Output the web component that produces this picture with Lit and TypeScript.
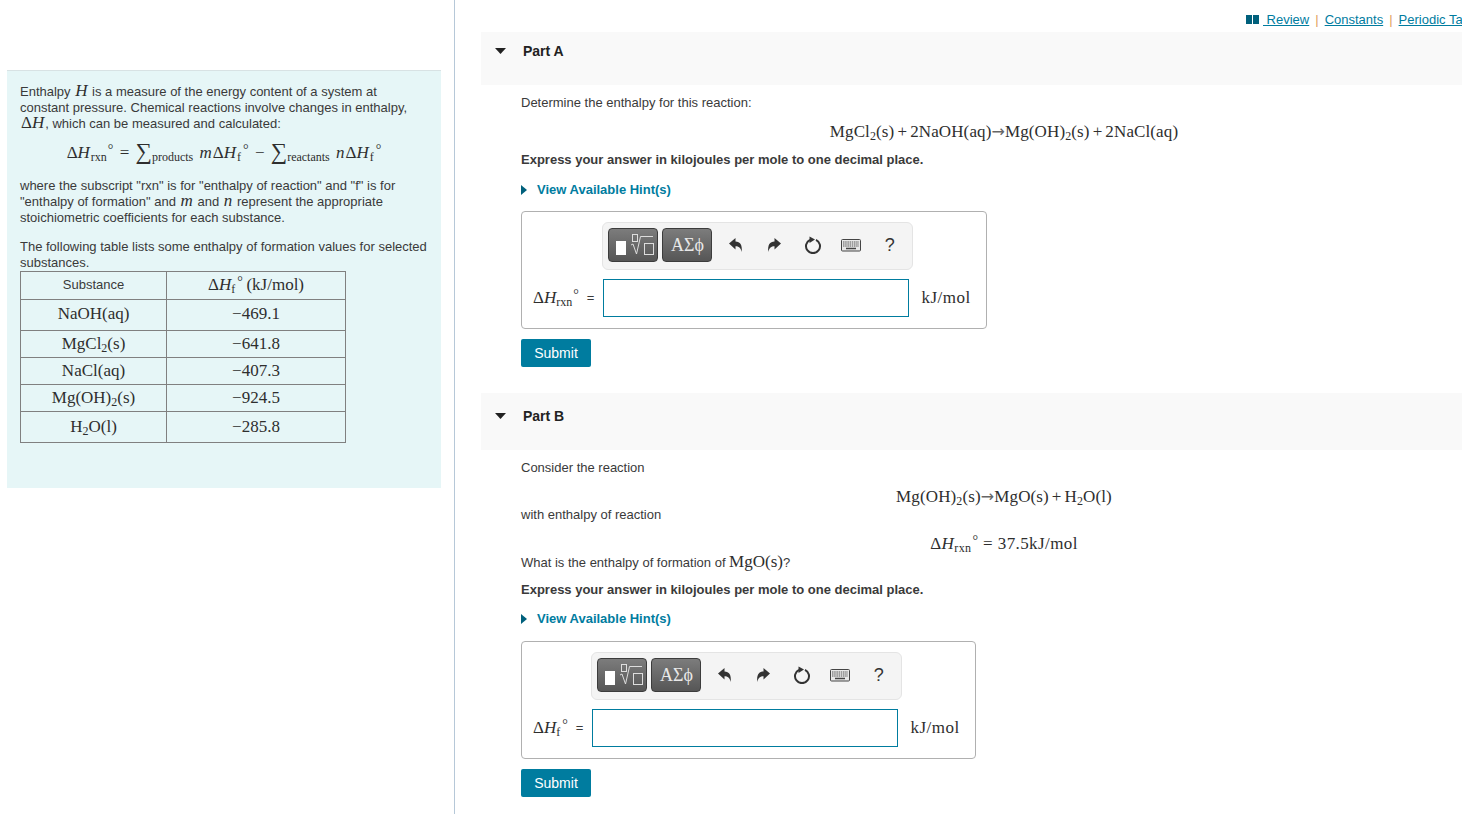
import { LitElement, css, html } from 'lit';
import { customElement } from 'lit/decorators.js';

const rows = [
	['NaOH(aq)', '469.1', 'tall up'],
	['MgCl<sub>2</sub>(s)', '641.8', ''],
	['NaCl(aq)', '407.3', ''],
	['Mg(OH)<sub>2</sub>(s)', '924.5', ''],
	['H<sub>2</sub>O(l)', '285.8', 'tall'],
];

const sub = (s: string) => html`<span class="sub">${s}</span>`;
const dHf = html`<span class="m">Δ<i>H</i>${sub('f')}<span class="deg f">°</span></span>`;
const dHrxn = html`<span class="m">Δ<i>H</i>${sub('rxn')}<span class="deg">°</span></span>`;
const plus = html`<span class="op">+</span>`;
const arrow = html`<span class="arrow">→</span>`;

@customElement('app-root')
export class AppRoot extends LitElement {
	static styles = css`
		:host {
			display: block;
			width: 1462px;
			height: 814px;
			overflow: hidden;
			background: #fff;
			color: #3a3a3a;
			font-family: 'Liberation Sans', Arial, sans-serif;
			font-size: 13px;
			line-height: 16px;
		}
		.page {
			display: flex;
			height: 814px;
		}
		.left {
			flex: none;
			width: 434px;
			height: 814px;
			padding: 70px 13px 0 7px;
			border-right: 1px solid #b6c8d8;
		}
		.panel {
			background: #e6f6f7;
			border-top: 1px solid #d8e2e4;
			padding: 13px 13px 45px;
		}
		.panel p {
			margin: 0;
		}
		.panel p .m {
			line-height: 0;
			margin: 0 1px;
		}
		.formula {
			display: flex;
			justify-content: center;
			align-items: center;
			box-sizing: border-box;
			height: 46px;
			padding-bottom: 4px;
			white-space: nowrap;
			word-spacing: 2px;
		}
		.formula i {
			letter-spacing: 1px;
		}
		.gap {
			margin-top: 13px !important;
		}
		.m {
			font-family: 'Liberation Serif', 'Times New Roman', serif;
			font-size: 17px;
			color: #2e2e2e;
			white-space: nowrap;
		}
		.m i {
			font-style: italic;
		}
		.sub,
		.m sub {
			font-size: 12px;
			vertical-align: -3px;
			line-height: 0;
		}
		.deg {
			font-size: 14px;
			vertical-align: 4px;
			line-height: 0;
			margin-left: 1px;
		}
		.deg.f {
			margin-left: 2px;
		}
		.sigma {
			font-size: 23px;
			vertical-align: -1px;
			line-height: 0;
		}
		.op {
			margin: 0 3px;
		}
		.arrow {
			font-family: 'DejaVu Sans', sans-serif;
			font-size: 16px;
			color: #666;
		}
		table {
			border-collapse: collapse;
			width: 326px;
		}
		td {
			border: 1px solid #808080;
			text-align: center;
			padding: 0;
			height: 26px;
		}
		td:first-child {
			width: 145px;
		}
		tr.tall td {
			height: 30px;
		}
		tr.up td {
			height: 29px;
			padding-bottom: 1px;
		}
		tr.head td {
			height: 26px;
			padding-bottom: 1px;
		}
		.right {
			flex: none;
			width: 1006px;
			margin-left: 26px;
		}
		.links {
			height: 32px;
			display: flex;
			justify-content: flex-end;
			align-items: flex-start;
			padding: 12px 7px 0 0;
			box-sizing: border-box;
			white-space: nowrap;
			color: #007c9f;
		}
		.links a {
			color: #007c9f;
			text-decoration: underline;
		}
		.links .sep {
			color: #e0a060;
			margin: 0 6px;
		}
		.links svg {
			margin: 3px 4px 0 0;
		}
		.bar {
			display: flex;
			background: #f9f9f9;
			height: 53px;
			padding-top: 11px;
			box-sizing: border-box;
			font-weight: bold;
			color: #222;
			font-size: 14px;
		}
		.bar.b {
			height: 57px;
			padding-top: 15px;
		}
		.bar svg {
			margin: 5px 17px 0 14px;
		}
		.body {
			padding-left: 40px;
		}
		.body p {
			margin: 0;
		}
		.eq {
			display: flex;
			justify-content: center;
			white-space: nowrap;
			height: 18px;
			line-height: 18px;
			letter-spacing: 0.12px;
		}
		.wide {
			letter-spacing: 0.4px;
		}
		.strong {
			font-weight: bold;
		}
		.hint {
			display: flex;
			align-items: center;
			gap: 10px;
			color: #007c9f;
			font-weight: bold;
			height: 16px;
		}
		.answer {
			display: grid;
			grid-template-columns: auto 306px auto;
			grid-template-rows: 48px 38px;
			row-gap: 9px;
			width: fit-content;
			box-sizing: border-box;
			height: 118px;
			padding: 10px 15px 0 11px;
			border: 1px solid #b0b0b0;
			border-radius: 4px;
		}
		.toolbar {
			grid-column: 2;
			width: 311px;
			height: 48px;
			margin-left: -1px;
			box-sizing: border-box;
			display: flex;
			align-items: center;
			padding: 0 0 2px 5px;
			background: #f4f4f4;
			border: 1px solid #e4e4e4;
			border-radius: 6px;
		}
		.tbtn {
			width: 50px;
			height: 34px;
			box-sizing: border-box;
			margin-right: 4px;
			display: flex;
			align-items: center;
			justify-content: center;
			border: 1px solid #3c3c3c;
			border-radius: 4px;
			background: linear-gradient(#7c7c7c, #565656);
			color: #e8e8e8;
			font-family: 'Liberation Serif', serif;
			font-size: 18px;
		}
		.ticon {
			width: 38.5px;
			flex: none;
			display: flex;
			justify-content: center;
			color: #333;
			font-size: 18px;
			font-family: 'Liberation Sans', sans-serif;
		}
		.label {
			grid-column: 1;
			display: flex;
			align-items: center;
			margin-right: 9px;
			white-space: nowrap;
		}
		.assign {
			margin-left: 8px;
		}
		.input {
			box-sizing: border-box;
			height: 38px;
			border: 1.5px solid #007c9f;
			background: #fff;
		}
		.unit {
			display: flex;
			align-items: center;
			margin-left: 12px;
			letter-spacing: 0.5px;
		}
		.submit {
			display: flex;
			align-items: center;
			justify-content: center;
			width: 70px;
			height: 28px;
			margin-top: 10px;
			background: #007c9f;
			color: #fff;
			border-radius: 2px;
			font-size: 14px;
		}
	`;

	private answer(label: unknown) {
		return html`<div class="answer">
				<div class="toolbar">
					<div class="tbtn">
						<svg width="46" height="32" viewBox="0 0 46 32" fill="none">
							<rect x="6" y="12" width="10" height="14" fill="#fff" />
							<rect x="22.500" y="5.500" width="5" height="7" stroke="#ddd" />
							<path d="M21 16l2-1 3.500 10L30.500 7.500H43" stroke="#ddd" />
							<rect x="34.500" y="14.500" width="9" height="11" stroke="#ddd" />
						</svg>
					</div>
					<div class="tbtn">ΑΣϕ</div>
					<div class="ticon">
						<svg width="16" height="16" viewBox="0 0 16 16" fill="#333">
							<path d="M1 6.500 7.500 1v3.400c4.600 0 7 3.400 6.200 10.600-1-4.300-3-5.700-6.200-5.700V12.500z" />
						</svg>
					</div>
					<div class="ticon">
						<svg width="16" height="16" viewBox="0 0 16 16" fill="#333">
							<path d="M15 6.500 8.500 1v3.400C3.900 4.400 1.500 7.800 2.300 15c1-4.300 3-5.700 6.200-5.700V12.500z" />
						</svg>
					</div>
					<div class="ticon">
						<svg width="18" height="18" viewBox="0 0 18 18" fill="none">
							<path d="M6 3.800A7 7 0 1 0 12 3.800" stroke="#333" stroke-width="2" />
							<path d="M5.500 0.500 11 3.500 5.500 7z" fill="#333" />
						</svg>
					</div>
					<div class="ticon">
						<svg width="20" height="13" viewBox="0 0 20 13" fill="none">
							<rect x="0.500" y="0.500" width="19" height="11.500" rx="1" fill="#e8e8e8" stroke="#444" />
							<path d="M2 3h16M2 5h16M2 7h16" stroke="#555" stroke-dasharray="1.500 .7" />
							<path d="M5 9.500h10" stroke="#444" stroke-width="1.500" />
						</svg>
					</div>
					<div class="ticon">?</div>
				</div>
				<div class="label">${label}<span class="assign">=</span></div>
				<div class="input"></div>
				<div class="unit m">kJ/mol</div>
			</div>
			<div class="submit">Submit</div>`;
	}

	private hint() {
		return html`<div class="hint">
			<svg width="6" height="10" viewBox="0 0 6 10"><path d="M0 0 6 5 0 10z" fill="#00607c" /></svg>
			View Available Hint(s)
		</div>`;
	}

	private caret() {
		return html`<svg width="11" height="6" viewBox="0 0 11 6"><path d="M0 0h11L5.500 6z" fill="#222" /></svg>`;
	}

	render() {
		return html`<div class="page">
			<div class="left">
				<div class="panel">
					<p>
						Enthalpy <span class="m"><i>H</i></span> is a measure of the energy content of a system at constant pressure. Chemical
						reactions involve changes in enthalpy, <span class="m">Δ<i>H</i></span>, which can be measured and calculated:
					</p>
					<div class="formula">
						<span class="m">
							${dHrxn} = <span class="sigma">∑</span>${sub('products')} <i>m</i>${dHf} − <span class="sigma">∑</span>${sub('reactants')}
							<i>n</i>${dHf}
						</span>
					</div>
					<p>
						where the subscript "rxn" is for "enthalpy of reaction" and "f" is for "enthalpy of formation" and
						<span class="m"><i>m</i></span> and <span class="m"><i>n</i></span> represent the appropriate stoichiometric coefficients for
						each substance.
					</p>
					<p class="gap">The following table lists some enthalpy of formation values for selected substances.</p>
					<table>
						<tr class="head">
							<td>Substance</td>
							<td>${dHf} <span class="m">(kJ/mol)</span></td>
						</tr>
						${rows.map(
							(r) => html`<tr class=${r[2]}>
								<td><span class="m" .innerHTML=${r[0]}></span></td>
								<td><span class="m">−${r[1]}</span></td>
							</tr>`
						)}
					</table>
				</div>
			</div>
			<div class="right">
				<div class="links">
					<svg width="13" height="9" viewBox="0 0 13 9"><path d="M0 0h6v9H0zM7 0h6v9H7z" fill="#00607c" /></svg>
					<a>&nbsp;Review</a><span class="sep">|</span><a>Constants</a><span class="sep">|</span><a>Periodic Table</a>
				</div>
				<div class="bar">${this.caret()}Part A</div>
				<div class="body">
					<p style="margin-top:10px">Determine the enthalpy for this reaction:</p>
					<div class="eq" style="margin-top:12px">
						<span class="m">MgCl<sub>2</sub>(s)${plus}2NaOH(aq)${arrow}Mg(OH)<sub>2</sub>(s)${plus}2NaCl(aq)</span>
					</div>
					<p class="strong" style="margin-top:11px">Express your answer in kilojoules per mole to one decimal place.</p>
					<div style="margin-top:14px">${this.hint()}</div>
					<div style="margin-top:13px">${this.answer(dHrxn)}</div>
				</div>
				<div class="bar b" style="margin-top:26px">${this.caret()}Part B</div>
				<div class="body">
					<p style="margin-top:10px">Consider the reaction</p>
					<div class="eq" style="margin-top:12px">
						<span class="m">Mg(OH)<sub>2</sub>(s)${arrow}MgO(s)${plus}H<sub>2</sub>O(l)</span>
					</div>
					<p style="margin-top:1px">with enthalpy of reaction</p>
					<div class="eq" style="margin-top:12px"><span class="m wide">${dHrxn} = 37.5kJ/mol</span></div>
					<p style="margin-top:1px">What is the enthalpy of formation of <span class="m">MgO(s)</span>?</p>
					<p class="strong" style="margin-top:11px">Express your answer in kilojoules per mole to one decimal place.</p>
					<div style="margin-top:13px">${this.hint()}</div>
					<div style="margin-top:14px">${this.answer(dHf)}</div>
				</div>
			</div>
		</div>`;
	}
}
